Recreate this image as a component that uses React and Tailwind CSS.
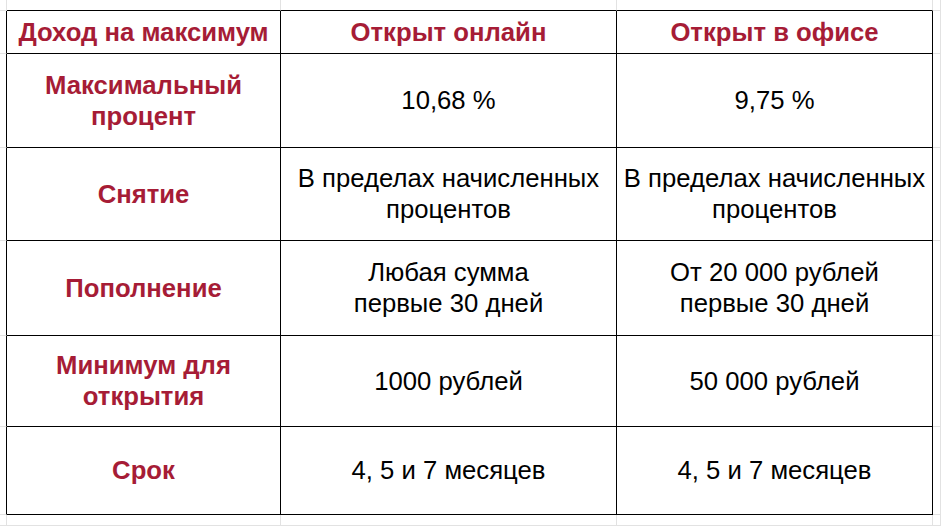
import React from "react";

const rows = [
  { label: ["Максимальный", "процент"], online: ["10,68 %"], office: ["9,75 %"] },
  { label: ["Снятие"], online: ["В пределах начисленных", "процентов"], office: ["В пределах начисленных", "процентов"] },
  { label: ["Пополнение"], online: ["Любая сумма", "первые 30 дней"], office: ["От 20 000 рублей", "первые 30 дней"] },
  { label: ["Минимум для", "открытия"], online: ["1000 рублей"], office: ["50 000 рублей"] },
  { label: ["Срок"], online: ["4, 5 и 7 месяцев"], office: ["4, 5 и 7 месяцев"] },
];

const header = ["Доход на максимум", "Открыт онлайн", "Открыт в офисе"];

// spreadsheet grid: 8 rows x 5 columns, table occupies rows 1-6, columns 1-3
const Cell = ({ r, c, children, kind }) => {
  const rightBlack = r >= 1 && r <= 6 && c <= 3;
  const bottomBlack = c >= 1 && c <= 3 && r <= 6;
  const cls = [
    "border-r border-b flex flex-col items-center justify-center text-center whitespace-nowrap",
    rightBlack ? "border-r-black" : "border-r-[#e2e2e2]",
    bottomBlack ? "border-b-black" : "border-b-[#e2e2e2]",
    kind === "label" ? "font-bold text-[#a61c36]" : "",
    kind === "value" ? "text-black" : "",
  ].join(" ");
  return <div className={cls}>{children}</div>;
};

const Lines = ({ lines }) => lines.map((l, i) => <span key={i}>{l}</span>);

export default function App() {
  const cells = [];
  // top gutter row
  for (let c = 0; c < 5; c++) cells.push(<Cell key={`t${c}`} r={0} c={c} />);
  // header
  cells.push(<Cell key="h0" r={1} c={0} />);
  header.forEach((h, i) =>
    cells.push(
      <Cell key={`h${i + 1}`} r={1} c={i + 1} kind="label">
        {h}
      </Cell>
    )
  );
  cells.push(<Cell key="h4" r={1} c={4} />);
  rows.forEach((row, i) => {
    const r = i + 2;
    cells.push(<Cell key={`a${r}`} r={r} c={0} />);
    cells.push(
      <Cell key={`b${r}`} r={r} c={1} kind="label">
        <Lines lines={row.label} />
      </Cell>
    );
    cells.push(
      <Cell key={`c${r}`} r={r} c={2} kind="value">
        <Lines lines={row.online} />
      </Cell>
    );
    cells.push(
      <Cell key={`d${r}`} r={r} c={3} kind="value">
        <Lines lines={row.office} />
      </Cell>
    );
    cells.push(<Cell key={`e${r}`} r={r} c={4} />);
  });
  for (let c = 0; c < 5; c++) cells.push(<Cell key={`z${c}`} r={7} c={c} />);

  return (
    <div className="w-[941px] h-[526px] bg-white overflow-hidden font-['Liberation_Sans',Arial,sans-serif] text-[25.7px] leading-[31px]">
      <div className="grid h-full grid-cols-[7px_274px_336px_316px_1fr] grid-rows-[11px_43px_94px_93px_95px_91px_88px_1fr]">
        {cells}
      </div>
    </div>
  );
}
